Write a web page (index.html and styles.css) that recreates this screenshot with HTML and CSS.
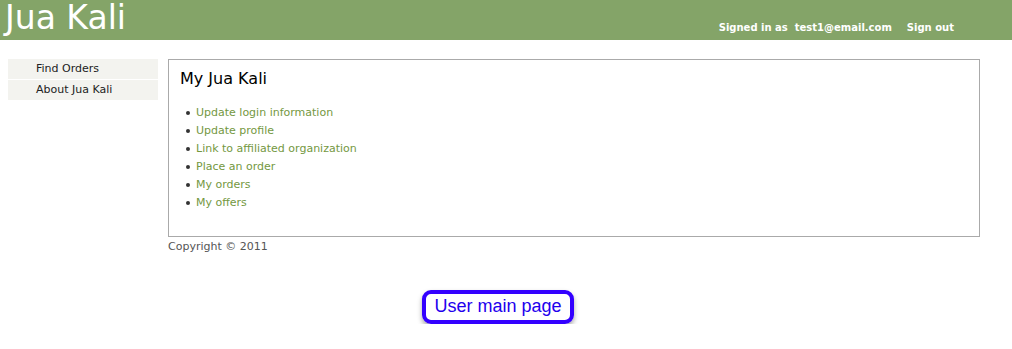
FILE: index.html
```html
<!DOCTYPE html>
<html lang="en">

<head>
    <meta charset="UTF-8">
    <meta name="viewport" content="width=device-width, initial-scale=1.0">
    <title>Jua Kali</title>
    <link rel="stylesheet" href="styles.css">
</head>

<body>
    <div class="header">
        <div class="logo">Jua Kali</div>
        <div class="account">
            <span>Signed in as</span>
            <span>test1@email.com</span>
            <a href="#" class="signout">Sign out</a>
        </div>
    </div>

    <div class="page">
        <ul class="sidebar">
            <li><a href="#">Find Orders</a></li>
            <li><a href="#">About Jua Kali</a></li>
        </ul>

        <div class="main">
            <div class="box">
                <h2>My Jua Kali</h2>
                <ul class="links">
                    <li><a href="#">Update login information</a></li>
                    <li><a href="#">Update profile</a></li>
                    <li><a href="#">Link to affiliated organization</a></li>
                    <li><a href="#">Place an order</a></li>
                    <li><a href="#">My orders</a></li>
                    <li><a href="#">My offers</a></li>
                </ul>
            </div>
            <div class="copyright">Copyright &copy; 2011</div>
        </div>
    </div>

    <div class="caption">
        <span class="tag">User main page</span>
    </div>
</body>

</html>
```

FILE: styles.css
```css
body {
    margin: 0;
    font-family: 'DejaVu Sans', sans-serif;
    font-size: 11px;
    color: #222;
    background: #fff;
}

a {
    text-decoration: none;
    color: inherit;
}

.header {
    background: #84a468;
    height: 40px;
    display: flex;
    justify-content: space-between;
    align-items: flex-start;
}

.logo {
    color: #fff;
    font-size: 33px;
    line-height: 36px;
    padding-left: 5px;
}

.account {
    color: #fff;
    font-weight: bold;
    font-size: 10px;
    padding-top: 22px;
    padding-right: 58px;
    display: flex;
    gap: 7px;
}

.account .signout {
    margin-left: 8px;
}

.page {
    display: flex;
    gap: 10px;
    padding: 19px 32px 0 8px;
}

.sidebar {
    list-style: none;
    margin: 0;
    padding: 0;
    width: 150px;
    flex-shrink: 0;
}

.sidebar li {
    background: #f3f3ef;
    border-bottom: 1px solid #fff;
    height: 20px;
    line-height: 19px;
    padding-left: 28px;
}

.main {
    flex: 1;
}

.box {
    border: 1px solid #aaa;
    height: 176px;
    padding: 0 11px;
}

.box h2 {
    font-weight: normal;
    font-size: 16px;
    margin: 9px 0 16px;
    color: #000;
}

.links {
    list-style: none;
    margin: 0;
    padding-left: 16px;
}

.links li {
    line-height: 18px;
    position: relative;
}

.links li::before {
    content: "";
    position: absolute;
    left: -10px;
    top: 7px;
    width: 4px;
    height: 4px;
    border-radius: 50%;
    background: #333;
}

.links a {
    color: #74983f;
}

.copyright {
    color: #555;
    margin-top: 3px;
}

.caption {
    display: flex;
    justify-content: center;
    margin-top: 37px;
    padding-right: 16px;
}

.tag {
    font-family: 'Liberation Sans', sans-serif;
    font-size: 18px;
    color: #2200ee;
    border: 4px solid #3300ff;
    border-radius: 9px;
    padding: 2px 8px 3px;
    box-shadow: 0 3px 5px rgba(0, 0, 0, 0.35);
}
```
